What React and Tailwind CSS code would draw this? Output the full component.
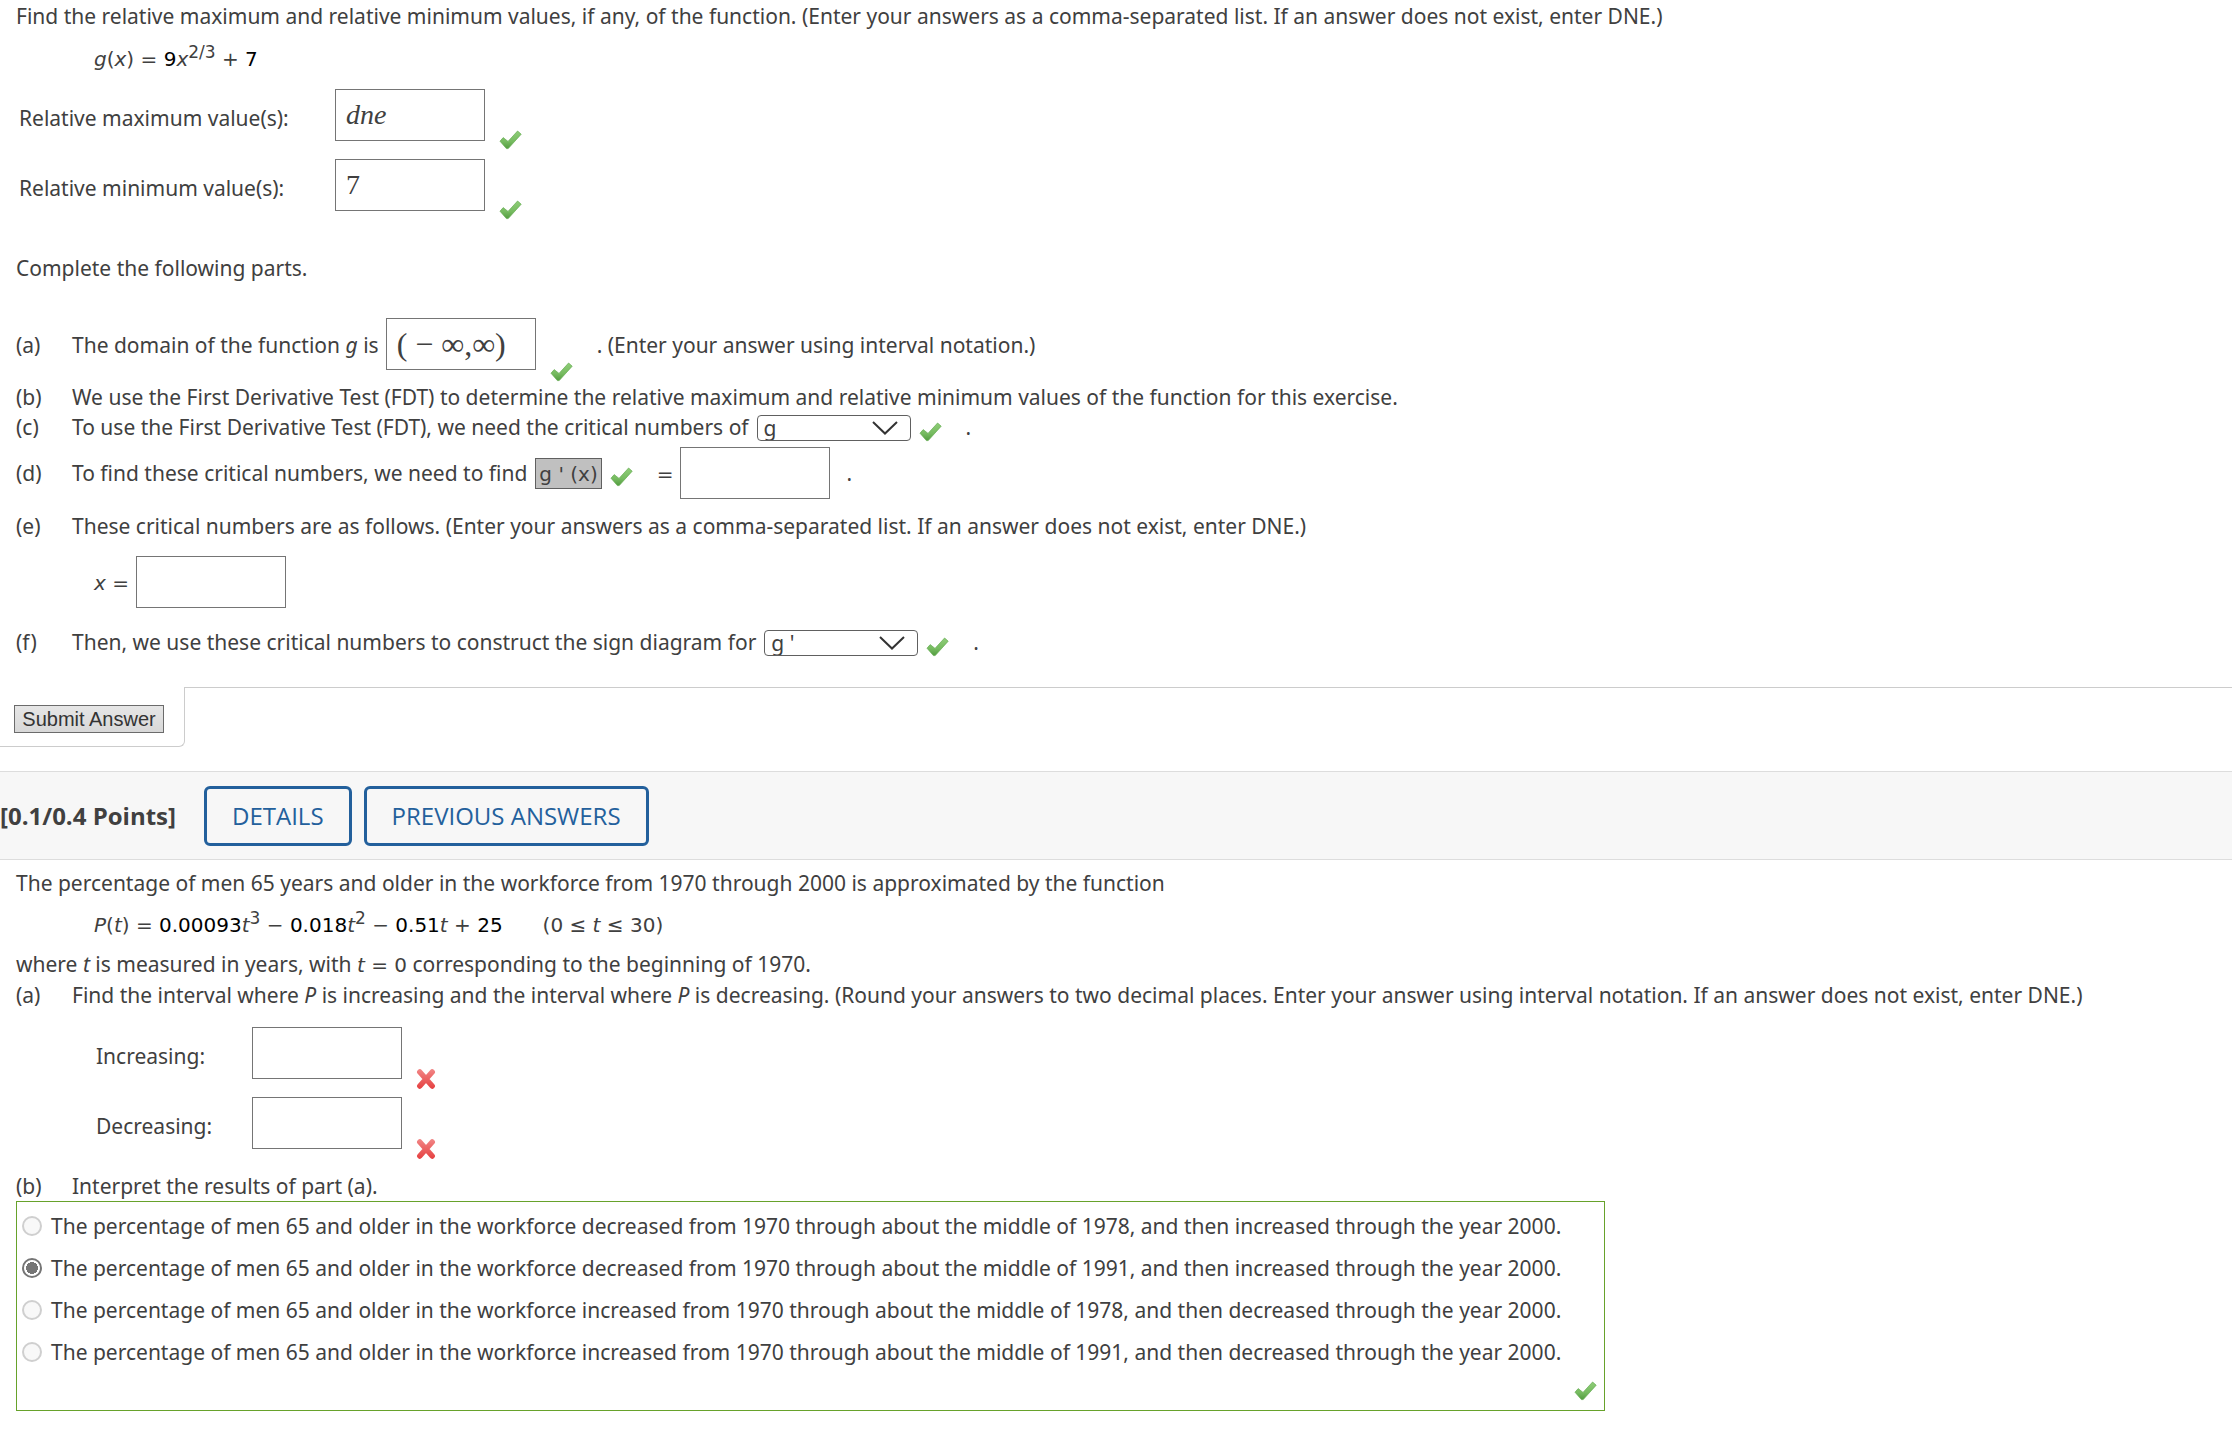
const CheckIcon = () => (
  <svg viewBox="0 0 23 20" className="h-5 w-[23px] shrink-0" role="img" aria-label="Correct">
    <defs>
      <linearGradient id="tick" x1="0" y1="0" x2="0" y2="1">
        <stop offset="0" stopColor="#8fcd78" />
        <stop offset="0.6" stopColor="#76bb60" />
        <stop offset="1" stopColor="#539c40" />
      </linearGradient>
    </defs>
    <path
      d="M1 11.200 4.200 7.600 9 11.400 18.600 1 22.200 4.200 9.200 18.600 7.400 18.600Z"
      fill="url(#tick)"
      stroke="#63ab4f"
      strokeOpacity="0.7"
      strokeLinejoin="round"
    />
  </svg>
);

const CrossIcon = () => (
  <svg viewBox="0 0 20 22" className="h-[22px] w-5 shrink-0" role="img" aria-label="Incorrect">
    <defs>
      <linearGradient id="cross" x1="0" y1="0" x2="0" y2="22" gradientUnits="userSpaceOnUse">
        <stop offset="0" stopColor="#f28a8a" />
        <stop offset="1" stopColor="#e53c3c" />
      </linearGradient>
    </defs>
    <path d="M3.800 4 16.200 18M16.200 4 3.800 18" stroke="url(#cross)" strokeWidth="5.500" strokeLinecap="round" />
  </svg>
);

const AnswerBox = ({ id, label, value = '', className = 'text-[28px]' }) => (
  <input
    id={id}
    type="text"
    aria-label={label}
    defaultValue={value}
    className={`h-[52px] w-[150px] shrink-0 border border-[#757575] bg-white px-2.5 font-['Liberation_Serif',serif] ${className}`}
  />
);

const Choice = ({ label, value }) => (
  <span className="relative mt-[3px] block w-[154px] shrink-0">
    <select
      aria-label={label}
      defaultValue={value}
      className="block h-[26px] w-full appearance-none rounded border border-[#606060] bg-white pl-1.5 leading-6"
    >
      <option>{value}</option>
    </select>
    <svg viewBox="0 0 26 14" className="pointer-events-none absolute top-[6px] right-[13px] h-[14px] w-[26px]">
      <path d="M1 1 13 12.500 25 1" fill="none" stroke="#333" strokeWidth="2" />
    </svg>
  </span>
);

const Part = ({ letter, children }) => (
  <div className="flex items-start">
    <span className="w-14 shrink-0">({letter})</span>
    {children}
  </div>
);

const AnswerRow = ({ id, label, labelWidth, value, inputClass, icon }) => (
  <div className="flex h-[62px] items-start">
    <label htmlFor={id} className={`mt-[14px] ${labelWidth}`}>
      {label}
    </label>
    <AnswerBox id={id} value={value} className={inputClass} />
    <span className="mt-[41px] ml-[14px]">{icon}</span>
  </div>
);

const Math = ({ children }) => <span className="font-['DejaVu_Sans',sans-serif] text-[20px]">{children}</span>;

const Num = ({ children }) => <span className="text-black">{children}</span>;

const Sup = ({ children }) => <sup className="text-[17px] leading-none">{children}</sup>;

const options = [
  'The percentage of men 65 and older in the workforce decreased from 1970 through about the middle of 1978, and then increased through the year 2000.',
  'The percentage of men 65 and older in the workforce decreased from 1970 through about the middle of 1991, and then increased through the year 2000.',
  'The percentage of men 65 and older in the workforce increased from 1970 through about the middle of 1978, and then decreased through the year 2000.',
  'The percentage of men 65 and older in the workforce increased from 1970 through about the middle of 1991, and then decreased through the year 2000.',
];

const ExtremaQuestion = () => (
  <section className="px-4 pt-px">
    <p>
      Find the relative maximum and relative minimum values, if any, of the function. (Enter your answers as a
      comma-separated list. If an answer does not exist, enter DNE.)
    </p>
    <p className="mt-3 h-[30px] pl-[78px]">
      <Math>
        <i>g</i>(<i>x</i>) = <Num>9</Num><i>x</i><Sup>2/3</Sup> + <Num>7</Num>
      </Math>
    </p>

    <div className="mt-4 flex flex-col gap-2 pl-[3px]">
      <AnswerRow id="rel-max" label="Relative maximum value(s):" labelWidth="w-[316px]" value="dne" inputClass="text-[28px] italic" icon={<CheckIcon />} />
      <AnswerRow id="rel-min" label="Relative minimum value(s):" labelWidth="w-[316px]" value="7" inputClass="text-[28px]" icon={<CheckIcon />} />
    </div>

    <p className="mt-8">Complete the following parts.</p>

    <div className="mt-[35px] flex items-start">
      <span className="mt-3 w-14 shrink-0">(a)</span>
      <label htmlFor="domain" className="mt-3 mr-[7px]">The domain of the function <i>g</i> is</label>
      <AnswerBox id="domain" value="( − ∞,∞)" className="text-[32px]" />
      <span className="mt-11 ml-[14px]"><CheckIcon /></span>
      <span className="mt-3 ml-6">. (Enter your answer using interval notation.)</span>
    </div>
    <Part letter="b">
      We use the First Derivative Test (FDT) to determine the relative maximum and relative minimum values of the
      function for this exercise.
    </Part>
    <Part letter="c">
      <span className="mr-2">To use the First Derivative Test (FDT), we need the critical numbers of</span>
      <Choice label="Function" value="g" />
      <span className="mt-2.5 ml-2"><CheckIcon /></span>
      <span className="ml-6">.</span>
    </Part>
    <div className="mt-[5px] flex items-center">
      <span className="w-14 shrink-0">(d)</span>
      <span className="mr-2">To find these critical numbers, we need to find</span>
      <span className="border border-[#606060] bg-[#c0c0c0] px-[3px] leading-7"><Math>g ' (x)</Math></span>
      <span className="mt-2 ml-2"><CheckIcon /></span>
      <span className="mr-[7px] ml-6"><Math>=</Math></span>
      <AnswerBox label="Derivative of g" />
      <span className="ml-4">.</span>
    </div>
    <div className="mt-3">
      <Part letter="e">
        These critical numbers are as follows. (Enter your answers as a comma-separated list. If an answer does not
        exist, enter DNE.)
      </Part>
    </div>
    <div className="mt-[15px] flex items-center pl-[78px]">
      <label htmlFor="critical" className="mr-[7px]"><Math><i>x</i> =</Math></label>
      <AnswerBox id="critical" />
    </div>
    <div className="mt-[19px]">
      <Part letter="f">
        <span className="mr-2">Then, we use these critical numbers to construct the sign diagram for</span>
        <Choice label="Sign diagram function" value="g '" />
        <span className="mt-2.5 ml-2"><CheckIcon /></span>
        <span className="ml-6">.</span>
      </Part>
    </div>
  </section>
);

const WorkforceQuestion = () => (
  <section className="px-4 pt-2">
    <p>The percentage of men 65 years and older in the workforce from 1970 through 2000 is approximated by the function</p>
    <p className="mt-3 flex h-[30px] gap-10 pl-[78px]">
      <Math>
        <i>P</i>(<i>t</i>) = <Num>0.00093</Num><i>t</i><Sup>3</Sup> − <Num>0.018</Num><i>t</i><Sup>2</Sup> −{' '}
        <Num>0.51</Num><i>t</i> + <Num>25</Num>
      </Math>
      <Math>(0 ≤ <i>t</i> ≤ 30)</Math>
    </p>
    <p className="mt-[9px]">
      where <i>t</i> is measured in years, with <Math><i>t</i> = 0</Math> corresponding to the beginning of 1970.
    </p>
    <Part letter="a">
      <span>
        Find the interval where <i>P</i> is increasing and the interval where <i>P</i> is decreasing. (Round your
        answers to two decimal places. Enter your answer using interval notation. If an answer does not exist, enter
        DNE.)
      </span>
    </Part>

    <div className="mt-[17px] flex flex-col gap-2 pl-20">
      <AnswerRow id="inc" label="Increasing:" labelWidth="w-[156px]" icon={<CrossIcon />} />
      <AnswerRow id="dec" label="Decreasing:" labelWidth="w-[156px]" icon={<CrossIcon />} />
    </div>

    <div className="mt-3">
      <Part letter="b">Interpret the results of part (a).</Part>
    </div>
    <fieldset
      aria-label="Interpret the results of part (a)."
      className="max-w-[1589px] border border-[#67a22b] pt-[9px] pr-[7px] pb-[9px] pl-[5px]"
    >
      <div className="flex flex-col gap-3">
        {options.map((option, i) => (
          <label key={option} className="flex items-center gap-[9px]">
            <input
              type="radio"
              name="interpretation"
              defaultChecked={i === 1}
              className="size-5 shrink-0 appearance-none rounded-full border-2 border-[#cfcfcf] bg-[#f8f8f8] checked:border-[#757575] checked:bg-[radial-gradient(circle,#757575_0_6px,#fff_6px)]"
            />
            {option}
          </label>
        ))}
      </div>
      <div className="mt-[14px] flex justify-end"><CheckIcon /></div>
    </fieldset>
  </section>
);

const App = () => {
  return (
    <div className="min-h-screen overflow-x-hidden bg-white font-['Noto_Sans','DejaVu_Sans',sans-serif] text-[21px] leading-[30px] text-[#404040]">
      <ExtremaQuestion />

      {/* Submit tab */}
      <div className="mt-[30px] flex">
        <div className="rounded-br-[6px] border-r border-b border-[#ccc] pt-[18px] pr-5 pb-[13px] pl-[14px]">
          <button
            type="button"
            className="block h-7 w-[150px] border border-[#6b6b6b] bg-gradient-to-b from-[#e6e6e6] to-[#d8d8d8] font-['Liberation_Sans',sans-serif] text-[20px] leading-6 text-[#333]"
          >
            Submit Answer
          </button>
        </div>
        <div className="flex-1 border-t border-[#ccc]" />
      </div>

      {/* Question header */}
      <header className="mt-6 flex items-center border-y border-[#ddd] bg-[#f7f7f7] pt-[14px] pb-[13px] font-['Open_Sans',sans-serif] text-[24px]">
        <h2 className="mr-7 font-bold">[0.1/0.4 Points]</h2>
        <button type="button" className="mr-3 h-[60px] rounded-md border-[3px] border-[#23609c] px-[25px] font-medium text-[#23609c]">
          DETAILS
        </button>
        <button type="button" className="h-[60px] rounded-md border-[3px] border-[#23609c] px-[25px] font-medium text-[#23609c]">
          PREVIOUS ANSWERS
        </button>
      </header>

      <WorkforceQuestion />
    </div>
  );
};

export default App;
